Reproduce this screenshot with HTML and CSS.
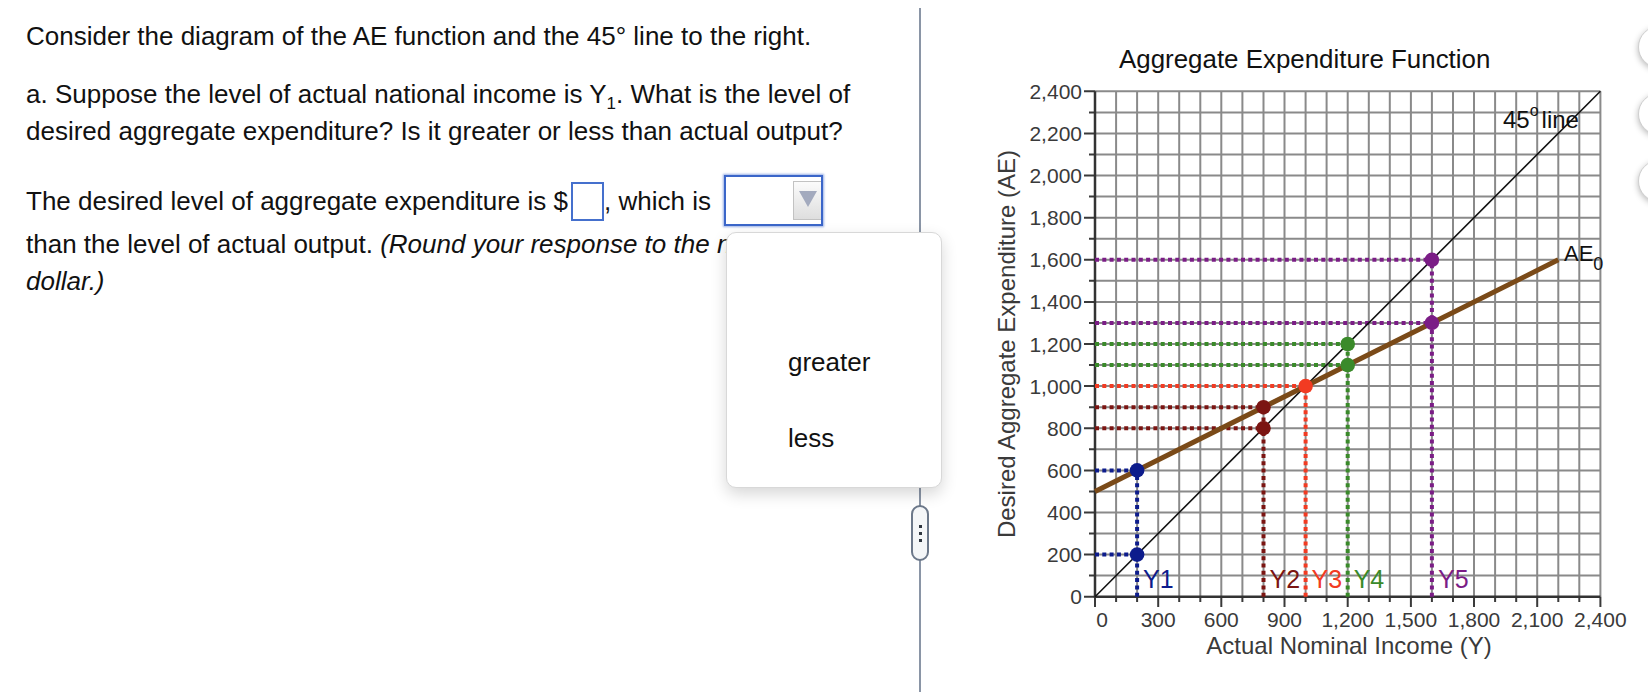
FILE: index.html
```html
<!DOCTYPE html>
<html lang="en">
<head>
<meta charset="utf-8">
<title>Aggregate Expenditure Function</title>
<link rel="stylesheet" href="styles.css">
</head>
<body>
<div class="page">
  <section class="question">
    <p class="intro">Consider the diagram of the AE function and the 45° line to the right.</p>
    <p class="prompt">a. Suppose the level of actual national income is Y<sub>1</sub>. What is the level of<br>desired aggregate expenditure? Is it greater or less than actual output?</p>
    <p class="answer">The desired level of aggregate expenditure is $<span class="num-input"></span>, which is <span class="select"><span class="select-btn"><span class="tri"></span></span></span><br>than the level of actual output. <i>(Round your response to the nearest</i><br><i>dollar.)</i></p>
  </section>

  <div class="divider"><span class="handle"><span></span><span></span><span></span></span></div>

  <figure class="chart">
    <svg class="chart-svg" width="727" height="692" viewBox="921 0 727 692" xmlns="http://www.w3.org/2000/svg">
      <text class="title" x="1119" y="68">Aggregate Expenditure Function</text>

      <path class="grid" d="M1116.1 91.3V596.7M1137.1 91.3V596.7M1158.2 91.3V596.7M1179.2 91.3V596.7M1200.3 91.3V596.7M1221.3 91.3V596.7M1242.4 91.3V596.7M1263.5 91.3V596.7M1284.5 91.3V596.7M1305.6 91.3V596.7M1326.6 91.3V596.7M1347.7 91.3V596.7M1368.8 91.3V596.7M1389.8 91.3V596.7M1410.9 91.3V596.7M1431.9 91.3V596.7M1453 91.3V596.7M1474 91.3V596.7M1495.1 91.3V596.7M1516.2 91.3V596.7M1537.2 91.3V596.7M1558.3 91.3V596.7M1579.3 91.3V596.7M1600.4 91.3V596.7
        M1095 575.6H1600.4M1095 554.6H1600.4M1095 533.5H1600.4M1095 512.5H1600.4M1095 491.4H1600.4M1095 470.4H1600.4M1095 449.3H1600.4M1095 428.2H1600.4M1095 407.2H1600.4M1095 386.1H1600.4M1095 365.1H1600.4M1095 344H1600.4M1095 322.9H1600.4M1095 301.9H1600.4M1095 280.8H1600.4M1095 259.8H1600.4M1095 238.7H1600.4M1095 217.7H1600.4M1095 196.6H1600.4M1095 175.5H1600.4M1095 154.5H1600.4M1095 133.4H1600.4M1095 112.4H1600.4M1095 91.3H1600.4"/>

      <path class="ticks" d="M1084 596.7H1095M1089 575.6H1095M1084 554.6H1095M1089 533.5H1095M1084 512.5H1095M1089 491.4H1095M1084 470.4H1095M1089 449.3H1095M1084 428.2H1095M1089 407.2H1095M1084 386.1H1095M1089 365.1H1095M1084 344H1095M1089 322.9H1095M1084 301.9H1095M1089 280.8H1095M1084 259.8H1095M1089 238.7H1095M1084 217.7H1095M1089 196.6H1095M1084 175.5H1095M1089 154.5H1095M1084 133.4H1095M1089 112.4H1095M1084 91.3H1095
        M1095 596.7V607M1116.1 596.7V602M1137.1 596.7V602M1158.2 596.7V607M1179.2 596.7V602M1200.3 596.7V602M1221.3 596.7V607M1242.4 596.7V602M1263.5 596.7V602M1284.5 596.7V607M1305.6 596.7V602M1326.6 596.7V602M1347.7 596.7V607M1368.8 596.7V602M1389.8 596.7V602M1410.9 596.7V607M1431.9 596.7V602M1453 596.7V602M1474 596.7V607M1495.1 596.7V602M1516.2 596.7V602M1537.2 596.7V607M1558.3 596.7V602M1579.3 596.7V602M1600.4 596.7V607"/>
      <path class="axis" d="M1095 91.3V596.7H1600.4"/>

      <g class="ylabels">
        <text x="1082" y="604.2">0</text>
        <text x="1082" y="562.1">200</text>
        <text x="1082" y="520">400</text>
        <text x="1082" y="477.9">600</text>
        <text x="1082" y="435.7">800</text>
        <text x="1082" y="393.6">1,000</text>
        <text x="1082" y="351.5">1,200</text>
        <text x="1082" y="309.4">1,400</text>
        <text x="1082" y="267.3">1,600</text>
        <text x="1082" y="225.2">1,800</text>
        <text x="1082" y="183">2,000</text>
        <text x="1082" y="140.9">2,200</text>
        <text x="1082" y="98.8">2,400</text>
      </g>
      <g class="xlabels">
        <text x="1102" y="627">0</text>
        <text x="1158.2" y="627">300</text>
        <text x="1221.3" y="627">600</text>
        <text x="1284.5" y="627">900</text>
        <text x="1347.7" y="627">1,200</text>
        <text x="1410.9" y="627">1,500</text>
        <text x="1474" y="627">1,800</text>
        <text x="1537.2" y="627">2,100</text>
        <text x="1600.4" y="627">2,400</text>
      </g>
      <text class="axis-title" x="1349" y="654">Actual Nominal Income (Y)</text>
      <text class="axis-title" transform="translate(1015 344) rotate(-90)">Desired Aggregate Expenditure (AE)</text>

      <g class="guides">
        <path class="c1" d="M1095 554.6H1137.1M1095 470.4H1137.1M1137.1 596.7V470.4"/>
        <path class="c2" d="M1095 428.2H1263.5M1095 407.2H1263.5M1263.5 596.7V407.2"/>
        <path class="c3" d="M1095 386.1H1305.6M1305.6 596.7V386.1"/>
        <path class="c4" d="M1095 365.1H1347.7M1095 344H1347.7M1347.7 596.7V344"/>
        <path class="c5" d="M1095 322.9H1431.9M1095 259.8H1431.9M1431.9 596.7V259.8"/>
      </g>

      <path class="line45" d="M1095 596.7L1600.4 91.3"/>
      <path class="ae" d="M1095 491.4L1558.3 259.8"/>

      <g class="dots">
        <circle class="f1" cx="1137.1" cy="554.6" r="7.3"/>
        <circle class="f1" cx="1137.1" cy="470.4" r="7.3"/>
        <circle class="f2" cx="1263.5" cy="428.2" r="7.3"/>
        <circle class="f2" cx="1263.5" cy="407.2" r="7.3"/>
        <circle class="f3" cx="1305.6" cy="386.1" r="7.3"/>
        <circle class="f4" cx="1347.7" cy="365.1" r="7.3"/>
        <circle class="f4" cx="1347.7" cy="344" r="7.3"/>
        <circle class="f5" cx="1431.9" cy="322.9" r="7.3"/>
        <circle class="f5" cx="1431.9" cy="259.8" r="7.3"/>
      </g>

      <g class="ylab">
        <text class="f1" x="1143" y="588">Y1</text>
        <text class="f2" x="1269.5" y="588">Y2</text>
        <text class="f3" x="1311.6" y="588">Y3</text>
        <text class="f4" x="1353.7" y="588">Y4</text>
        <text class="f5" x="1438" y="588">Y5</text>
      </g>

      <text class="curve-label" x="1503" y="128">45<tspan class="sup" dy="-12">o</tspan><tspan dx="3" dy="12">line</tspan></text>
      <text class="curve-label ae-label" x="1564" y="261">AE<tspan class="sub" dy="9">0</tspan></text>
    </svg>
  </figure>

  <div class="menu">
    <div class="menu-item"></div>
    <div class="menu-item">greater</div>
    <div class="menu-item">less</div>
  </div>

  <div class="side-buttons">
    <span class="round-btn"></span>
    <span class="round-btn"></span>
    <span class="round-btn"></span>
  </div>
</div>
</body>
</html>
```

FILE: styles.css
```css
html, body {
  margin: 0;
  padding: 0;
  background: #ffffff;
}

.page {
  position: relative;
  display: flex;
  width: 1648px;
  height: 692px;
  overflow: hidden;
  font-family: "Liberation Sans", Arial, Helvetica, sans-serif;
  color: #111111;
}

.question {
  width: 919px;
  flex: none;
  box-sizing: border-box;
  padding: 17.5px 0 0 26px;
  font-size: 26px;
}

.question p {
  margin: 0;
  white-space: nowrap;
}

.intro,
.prompt {
  line-height: 37px;
}

.prompt {
  margin-top: 21px !important;
}

.prompt sub {
  font-size: 17px;
  line-height: 0;
  vertical-align: -6px;
}

.answer {
  margin-top: 25.5px !important;
  line-height: 37px;
}

.num-input {
  display: inline-block;
  overflow: hidden;
  box-sizing: border-box;
  width: 33px;
  height: 39px;
  margin-left: 3px;
  border: 2px solid #4570cd;
  background: #ffffff;
  vertical-align: -11px;
}

.select {
  display: inline-block;
  overflow: hidden;
  box-sizing: border-box;
  width: 99px;
  height: 51px;
  margin-left: 6px;
  border: 2px solid #3b66c9;
  box-shadow: 0 0 2px 1px rgba(70, 110, 210, 0.55);
  background: #ffffff;
  vertical-align: -16px;
}

.select-btn {
  display: flex;
  box-sizing: border-box;
  width: 28px;
  height: 39px;
  margin: 4px 0 0 auto;
  border: 1px solid #c2c2c2;
  border-right: none;
  background: linear-gradient(#fbfbfb, #dedede);
  justify-content: center;
  align-items: center;
}

.tri {
  width: 0;
  height: 0;
  margin-bottom: 4px;
  border-left: 9px solid transparent;
  border-right: 9px solid transparent;
  border-top: 16px solid #a3aabe;
}

.divider {
  position: relative;
  flex: none;
  width: 2px;
  margin-top: 8px;
  background: #8a95a6;
}

.handle {
  position: absolute;
  left: -8px;
  top: 497px;
  box-sizing: border-box;
  width: 18px;
  height: 56px;
  border: 2px solid #6c788a;
  border-radius: 9px;
  background: #f4f6f8;
  display: flex;
  flex-direction: column;
  align-items: center;
  justify-content: center;
  gap: 4px;
}

.handle span {
  width: 3px;
  height: 3px;
  background: #2f3640;
}

.chart {
  flex: 1;
  margin: 0;
}

.chart-svg {
  display: block;
  font-family: "Liberation Sans", Arial, Helvetica, sans-serif;
}

.title {
  font-size: 25.9px;
  fill: #111111;
}

.grid {
  fill: none;
  stroke: #8a8a8a;
  stroke-width: 2;
}

.ticks {
  fill: none;
  stroke: #3a3a3a;
  stroke-width: 2;
}

.axis {
  fill: none;
  stroke: #333333;
  stroke-width: 2.5;
}

.ylabels text {
  font-size: 21px;
  fill: #3a3a3a;
  text-anchor: end;
}

.xlabels text {
  font-size: 21px;
  fill: #3a3a3a;
  text-anchor: middle;
}

.axis-title {
  font-size: 24px;
  fill: #3a3a3a;
  text-anchor: middle;
}

.guides path {
  fill: none;
  stroke-width: 4;
  stroke-dasharray: 4 3.3;
}

.guides .c1 { stroke: #0d1c8c; }
.guides .c2 { stroke: #7b1512; }
.guides .c3 { stroke: #f23b22; }
.guides .c4 { stroke: #3a8a2a; }
.guides .c5 { stroke: #7b1d86; }

.line45 {
  fill: none;
  stroke: #111111;
  stroke-width: 1.6;
}

.ae {
  fill: none;
  stroke: #7a4a18;
  stroke-width: 5;
}

.f1 { fill: #0d1c8c; }
.f2 { fill: #7b1512; }
.f3 { fill: #f23b22; }
.f4 { fill: #3a8a2a; }
.f5 { fill: #7b1d86; }

.ylab text {
  font-size: 25px;
}

.curve-label {
  font-size: 24px;
  fill: #111111;
}

.ae-label {
  font-size: 22px;
}

.curve-label .sup {
  font-size: 16px;
}

.curve-label .sub {
  font-size: 18px;
}

.menu {
  position: absolute;
  left: 726px;
  top: 232px;
  box-sizing: border-box;
  width: 216px;
  height: 256px;
  padding: 15px 0 0 61px;
  border: 1px solid #d8d8d8;
  border-radius: 10px;
  background: #ffffff;
  box-shadow: 0 6px 16px rgba(0, 0, 0, 0.16);
  font-size: 26px;
  color: #111111;
}

.menu-item {
  height: 76px;
  line-height: 76px;
}

.side-buttons {
  position: absolute;
  left: 1638px;
  top: 26px;
  display: flex;
  flex-direction: column;
  gap: 25px;
}

.round-btn {
  display: block;
  box-sizing: border-box;
  width: 42px;
  height: 42px;
  border: 1px solid #cfcfcf;
  border-radius: 50%;
  background: #ffffff;
  box-shadow: 0 2px 6px rgba(0, 0, 0, 0.28);
}
```
